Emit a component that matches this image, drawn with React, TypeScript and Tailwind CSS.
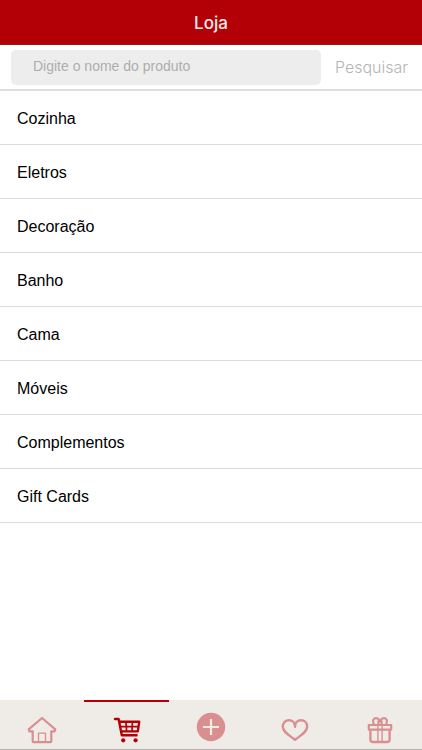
import { ReactNode } from "react";

const categories = [
  "Cozinha",
  "Eletros",
  "Decoração",
  "Banho",
  "Cama",
  "Móveis",
  "Complementos",
  "Gift Cards",
];

function HomeIcon() {
  return (
    <svg width="30" height="28" viewBox="0 0 30 28" fill="none" stroke="currentColor" strokeLinejoin="round">
      <path
        d="M15 2 28.3 13.4 27.6 15.3H24.3V25.2Q24.3 26.2 23.3 26.2H6.7Q5.7 26.2 5.7 25.2V15.3H2.4L1.7 13.4Z"
        strokeWidth="2.2"
      />
      <path d="M11.5 26V17.2H18.5V26" strokeWidth="1.3" />
    </svg>
  );
}

function CartIcon() {
  return (
    <svg width="28" height="26" viewBox="0 0 28 26" fill="none" stroke="currentColor">
      <path d="M2 2H5.6L8.8 18.2H23.6" strokeWidth="2.4" strokeLinecap="round" strokeLinejoin="round" />
      <path d="M6.6 4.8H26.2L24.8 14.4H8.4" strokeWidth="2.4" strokeLinejoin="round" />
      <path d="M7 9.6H25.4M13 5 13.6 14.4M19.4 5 19 14.4" strokeWidth="1.7" />
      <circle cx="10.2" cy="23.3" r="2.1" fill="currentColor" stroke="none" />
      <circle cx="22.6" cy="23.3" r="2.1" fill="currentColor" stroke="none" />
    </svg>
  );
}

function PlusIcon() {
  return (
    <svg width="30" height="30" viewBox="0 0 30 30">
      <circle cx="15" cy="15" r="14.2" fill="currentColor" />
      <path d="M15 7V23M7 15H23" stroke="#efece7" strokeWidth="2.2" />
    </svg>
  );
}

function HeartIcon() {
  return (
    <svg width="28" height="24" viewBox="0 0 28 24" fill="none" stroke="currentColor">
      <path
        d="M14 8.8C14 4.4 11.2 2.2 8 2.2 4.3 2.2 1.8 5 1.8 8.6 1.8 14.3 8.6 17.4 14 21.8 19.4 17.4 26.2 14.3 26.2 8.6 26.2 5 23.7 2.2 20 2.2 16.8 2.2 14 4.4 14 8.8Z"
        strokeWidth="2.4"
        strokeLinejoin="round"
      />
    </svg>
  );
}

function GiftIcon() {
  return (
    <svg width="26" height="28" viewBox="0 0 26 28" fill="none" stroke="currentColor" strokeLinejoin="round">
      <path d="M1.8 9H24.2V13.6H1.8Z" strokeWidth="2.2" />
      <path d="M3.4 13.6V23.4Q3.4 26 6 26H20Q22.6 26 22.6 23.4V13.6" strokeWidth="2.4" />
      <path d="M10.9 9V26M15.1 9V26" strokeWidth="1.4" />
      <path
        d="M7.2 8.6C4.8 5.4 6.4 2.1 9 2.1 11.6 2.1 12.6 4.2 12.2 6.6M18.8 8.6C21.2 5.4 19.6 2.1 17 2.1 14.4 2.1 13.4 4.2 13.8 6.6"
        strokeWidth="2.2"
      />
      <circle cx="13" cy="6.4" r="2" strokeWidth="1.6" />
    </svg>
  );
}

interface TabProps {
  label: string;
  active?: boolean;
  className?: string;
  children: ReactNode;
}

function Tab({ label, active, className = "pt-2", children }: TabProps) {
  return (
    <a
      href="#"
      aria-label={label}
      aria-current={active ? "page" : undefined}
      className={`flex flex-1 items-center justify-center border-t-2 ${className} ${
        active ? "border-[#b30006] text-[#b30006]" : "border-transparent text-[#d98f90]"
      }`}
    >
      {children}
    </a>
  );
}

export default function App() {
  return (
    <div className="flex min-h-screen flex-col bg-white font-['Liberation_Sans',Arial,sans-serif]">
      <header className="flex h-[45px] items-center justify-center border-b border-[#8f1a1c] bg-[#b30006] pt-0.5">
        <h1 className="font-['Inter','Liberation_Sans',sans-serif] text-[17px] leading-6 font-medium text-[#fbe9e9]">
          Loja
        </h1>
      </header>

      <form
        className="flex h-[46px] items-center border-b-2 border-[#dedede] pl-[11px]"
        onSubmit={(e) => e.preventDefault()}
      >
        <input
          type="search"
          aria-label="Nome do produto"
          placeholder="Digite o nome do produto"
          className="h-[35px] min-w-0 flex-1 rounded-[5px] bg-[#ededed] pr-4 pb-0.5 pl-[22px] text-[14px] text-[#333] outline-none placeholder:text-[#adadad]"
        />
        <button
          type="submit"
          className="px-[14px] font-['Inter','Liberation_Sans',sans-serif] text-[16px] leading-6 font-light text-[#b5b5b5]"
        >
          Pesquisar
        </button>
      </form>

      <main className="flex-1">
        <ul>
          {categories.map((category) => (
            <li key={category} className="border-b border-[#dcdcdc]">
              <a href="#" className="flex h-[53px] items-center px-[17px] pt-0.5 text-[16px] text-black">
                {category}
              </a>
            </li>
          ))}
        </ul>
      </main>

      <nav className="flex h-[50px] border-b border-[#b5b3b0] bg-[#efece7]">
        <Tab label="Início">
          <HomeIcon />
        </Tab>
        <Tab label="Loja" active>
          <CartIcon />
        </Tab>
        <Tab label="Adicionar" className="pt-0.5">
          <PlusIcon />
        </Tab>
        <Tab label="Favoritos">
          <HeartIcon />
        </Tab>
        <Tab label="Presentes">
          <GiftIcon />
        </Tab>
      </nav>
    </div>
  );
}
